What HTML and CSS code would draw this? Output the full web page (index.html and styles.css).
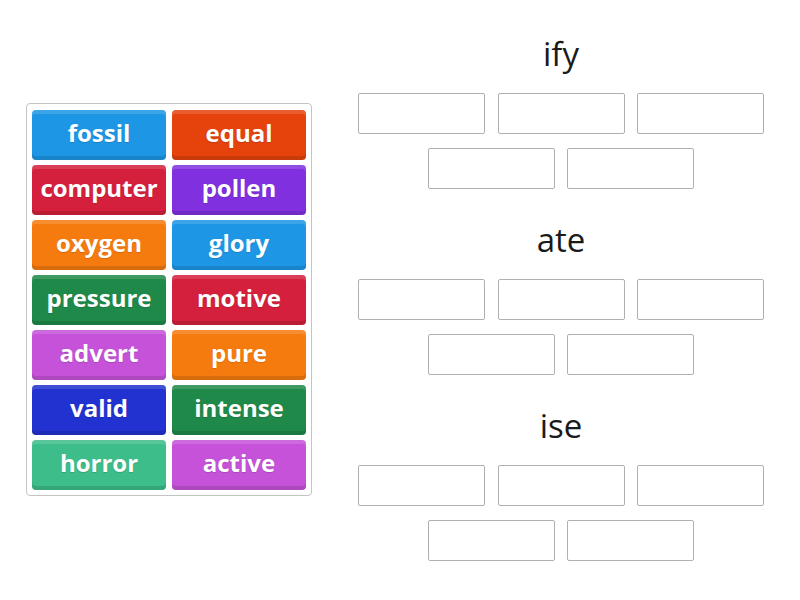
FILE: index.html
```html
<!DOCTYPE html>
<html>
<head>
<meta charset="utf-8">
<link rel="stylesheet" href="styles.css">
</head>
<body>
<div class="page">
  <div class="bank">
    <div class="tile c-blue">fossil</div>
    <div class="tile c-redorange">equal</div>
    <div class="tile c-red">computer</div>
    <div class="tile c-purple">pollen</div>
    <div class="tile c-orange">oxygen</div>
    <div class="tile c-blue">glory</div>
    <div class="tile c-green">pressure</div>
    <div class="tile c-red">motive</div>
    <div class="tile c-magenta">advert</div>
    <div class="tile c-orange">pure</div>
    <div class="tile c-navy">valid</div>
    <div class="tile c-green">intense</div>
    <div class="tile c-teal">horror</div>
    <div class="tile c-magenta">active</div>
  </div>
  <div class="groups">
    <div class="group">
      <div class="title">ify</div>
      <div class="slots">
        <div class="slot"></div><div class="slot"></div><div class="slot"></div>
        <div class="slot"></div><div class="slot"></div>
      </div>
    </div>
    <div class="group">
      <div class="title">ate</div>
      <div class="slots">
        <div class="slot"></div><div class="slot"></div><div class="slot"></div>
        <div class="slot"></div><div class="slot"></div>
      </div>
    </div>
    <div class="group">
      <div class="title">ise</div>
      <div class="slots">
        <div class="slot"></div><div class="slot"></div><div class="slot"></div>
        <div class="slot"></div><div class="slot"></div>
      </div>
    </div>
  </div>
</div>
</body>
</html>
```
FILE: styles.css
```css
html, body {
  margin: 0;
  padding: 0;
  background: #ffffff;
  font-family: "Open Sans", "Noto Sans", "Liberation Sans", sans-serif;
}

.page {
  display: flex;
  align-items: flex-start;
  padding-left: 26px;
  gap: 46px;
}

.bank {
  margin-top: 103px;
  border: 1px solid #c4c4c4;
  border-radius: 4px;
  padding: 6px 5px 5px 5px;
  display: grid;
  grid-template-columns: 134px 134px;
  grid-auto-rows: 50px;
  column-gap: 6px;
  row-gap: 5px;
}

.tile {
  border-radius: 4px;
  color: #ffffff;
  font-weight: 700;
  font-size: 24px;
  display: flex;
  align-items: center;
  justify-content: center;
  padding-bottom: 5px;
  box-sizing: border-box;
  box-shadow: inset 0 4px 0 rgba(255, 255, 255, 0.14), inset 0 -4px 0 rgba(0, 0, 0, 0.12);
  text-shadow: 0 1px 1px rgba(0, 0, 0, 0.15);
}

.c-blue { background: #1d97e5; }
.c-redorange { background: #e5420c; }
.c-red { background: #d4203c; }
.c-purple { background: #8130e0; }
.c-orange { background: #f57b0f; }
.c-green { background: #1f894a; }
.c-magenta { background: #c552d8; }
.c-navy { background: #2232d0; }
.c-teal { background: #3dbd89; }

.groups {
  width: 406px;
  padding-top: 33px;
  display: flex;
  flex-direction: column;
  gap: 30px;
}

.group {
  display: flex;
  flex-direction: column;
  align-items: center;
}

.title {
  font-size: 33px;
  line-height: 42px;
  color: #1a1a1a;
  margin-bottom: 18px;
}

.slots {
  display: flex;
  flex-wrap: wrap;
  justify-content: center;
  column-gap: 12.5px;
  row-gap: 14px;
  width: 406px;
}

.slot {
  width: 127px;
  height: 41px;
  box-sizing: border-box;
  border: 1px solid #b0b0b0;
  border-radius: 2px;
  background: #ffffff;
}
```
